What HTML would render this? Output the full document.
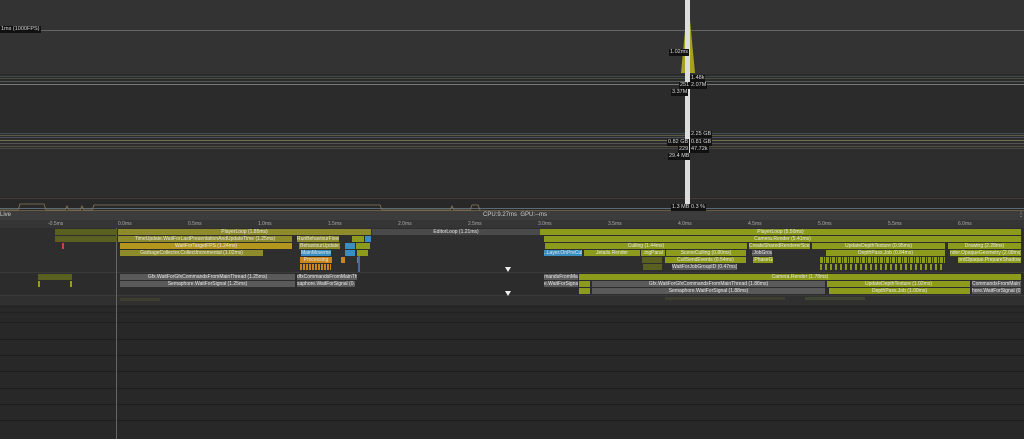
<!DOCTYPE html>
<html><head><meta charset="utf-8"><style>
*{margin:0;padding:0;box-sizing:border-box}
body{width:1024px;height:439px;overflow:hidden;background:#282828;position:relative;font-family:"Liberation Sans",sans-serif}
div{position:absolute}
.b{height:6px;font-size:5px;line-height:6px;color:#e8e8e8;text-align:center;white-space:nowrap;overflow:hidden}
.y{background:#8c9b1c}.o{background:#8e8c2a}.g{background:#5a5a5a}.bl{background:#3a8fc0}.or{background:#c9861a}.go{background:#b3971c}.dk{background:#5a6020}
.h{left:0;width:1024px;height:1px}
.lab{background:#111;color:#ddd;font-size:5.5px;line-height:7px;padding:0 1px;height:7px;white-space:nowrap}
.t{font-size:5px;color:#aaa;top:221px}
</style></head><body>
<div style="left:0;top:0;width:1024px;height:74px;background:#333"></div>
<div class="h" style="top:30px;background:#666"></div>
<div class="lab" style="left:0;top:26px">1ms (1000FPS)</div>
<div style="left:0;top:74px;width:1024px;height:58px;background:#2b2b2b"></div>
<div class="h" style="top:76px;background:#3e4a4a"></div>
<div class="h" style="top:78px;background:#4a5040"></div>
<div class="h" style="top:81px;background:#4f5a5a"></div>
<div class="h" style="top:84px;background:#777"></div>
<div style="left:0;top:132px;width:1024px;height:65px;background:#2d2d2d"></div>
<div class="h" style="top:133px;background:#3f4c56"></div>
<div class="h" style="top:135px;background:#5a5a40"></div>
<div class="h" style="top:137px;background:#4a5058"></div>
<div class="h" style="top:140px;background:#707050"></div>
<div class="h" style="top:143px;background:#555"></div>
<div class="h" style="top:146px;background:#5a5040"></div>
<div class="h" style="top:148px;background:#444"></div>
<div class="h" style="top:198px;background:#4a3a34"></div>
<div class="h" style="top:208px;background:#5b6a74"></div>
<div class="h" style="top:210px;background:#6a5a40"></div>
<svg style="position:absolute;left:0;top:0" width="1024" height="215"><polygon points="681,73 686,20 690,20 695,73" fill="#a8a020"/><polyline points="0,210 18,210 20,204 44,204 46,210 65,210 67,206 69,210 80,210 82,206 84,210 92,210 94,205 380,205 382,210 450,210 452,206 454,210 470,210 472,205 478,205 480,210" fill="none" stroke="#8a7a5a" stroke-width="0.8"/></svg>
<div style="left:685px;top:0;width:5px;height:211px;background:#ddd"></div>
<div class="lab" style="left:669px;top:49px">1.02ms</div>
<div class="lab" style="left:690px;top:75px">1.48k</div>
<div class="lab" style="left:679px;top:82px">251</div><div class="lab" style="left:690px;top:82px">2.07M</div>
<div class="lab" style="left:671px;top:89px">3.37M</div>
<div class="lab" style="left:690px;top:131px">2.25 GB</div>
<div class="lab" style="left:667px;top:139px">0.82 GB</div><div class="lab" style="left:690px;top:139px">0.81 GB</div>
<div class="lab" style="left:678px;top:146px">229</div><div class="lab" style="left:690px;top:146px">47.72k</div>
<div class="lab" style="left:668px;top:153px">29.4 MB</div>
<div class="lab" style="left:671px;top:204px">1.3 MB</div><div class="lab" style="left:690px;top:204px">0.3 %</div>
<div style="left:0;top:211px;width:1024px;height:9px;background:#3c3c3c;font-size:6px;color:#ccc;line-height:9px"><span style="position:absolute;left:0">Live</span><span style="position:absolute;left:483px">CPU:9.27ms&nbsp;&nbsp;GPU:--ms</span><span style="position:absolute;left:1018px">⋮</span></div>
<div style="left:0;top:220px;width:1024px;height:8px;background:#353535"></div>
<div class="t" style="left:48px">-0.5ms</div><div class="t" style="left:118px">0.0ms</div><div class="t" style="left:188px">0.5ms</div><div class="t" style="left:258px">1.0ms</div><div class="t" style="left:328px">1.5ms</div><div class="t" style="left:398px">2.0ms</div><div class="t" style="left:468px">2.5ms</div><div class="t" style="left:538px">3.0ms</div><div class="t" style="left:608px">3.5ms</div><div class="t" style="left:678px">4.0ms</div><div class="t" style="left:748px">4.5ms</div><div class="t" style="left:818px">5.0ms</div><div class="t" style="left:888px">5.5ms</div><div class="t" style="left:958px">6.0ms</div>
<div style="left:0;top:228px;width:1024px;height:44px;background:#2e2e2e"></div>
<div class="h" style="top:272px;background:#3a3a3a"></div>
<div style="left:0;top:273px;width:1024px;height:22px;background:#2c2c2c"></div>
<div class="h" style="top:295px;background:#3a3a3a"></div>
<div style="left:0;top:296px;width:1024px;height:9px;background:#303030"></div>
<div class="h" style="top:306px;background:#222"></div><div class="h" style="top:312px;background:#222"></div>
<div class="h" style="top:322px;background:#1e1e1e"></div><div class="h" style="top:339px;background:#1e1e1e"></div><div class="h" style="top:355px;background:#1e1e1e"></div><div class="h" style="top:371px;background:#1e1e1e"></div><div class="h" style="top:388px;background:#1e1e1e"></div><div class="h" style="top:404px;background:#1e1e1e"></div><div class="h" style="top:420px;background:#1e1e1e"></div>
<div style="left:116px;top:228px;width:1px;height:211px;background:#666"></div>
<!-- left rows -->
<div class="b dk" style="left:55px;top:229px;width:62px"></div>
<div class="b o" style="left:118px;top:229px;width:253px">PlayerLoop (1.85ms)</div>
<div class="b g" style="left:372px;top:229px;width:168px;background:#4a4a4a">EditorLoop (1.21ms)</div>
<div class="b dk" style="left:55px;top:236px;width:62px"></div>
<div class="b o" style="left:118px;top:236px;width:174px">TimeUpdate.WaitForLastPresentationAndUpdateTime (1.25ms)</div>
<div class="b o" style="left:297px;top:236px;width:42px">RunBehaviourFixed</div>
<div class="b y" style="left:352px;top:236px;width:12px"></div>
<div class="b bl" style="left:365px;top:236px;width:6px"></div>
<div class="b" style="left:62px;top:243px;width:2px;background:#c44"></div>
<div class="b go" style="left:120px;top:243px;width:172px">WaitForTargetFPS (1.24ms)</div>
<div class="b o" style="left:299px;top:243px;width:41px">BehaviourUpdate</div>
<div class="b bl" style="left:345px;top:243px;width:10px"></div>
<div class="b y" style="left:356px;top:243px;width:14px"></div>
<div class="b o" style="left:120px;top:250px;width:143px">GarbageCollector.CollectIncremental (1.02ms)</div>
<div class="b bl" style="left:301px;top:250px;width:30px">MainMovement</div>
<div class="b bl" style="left:345px;top:250px;width:10px"></div>
<div class="b y" style="left:357px;top:250px;width:11px"></div>
<div class="b or" style="left:300px;top:257px;width:32px">Processing</div>
<div class="b or" style="left:341px;top:257px;width:4px"></div>
<div class="b bl" style="left:357px;top:257px;width:2px"></div>
<div style="left:300px;top:264px;width:31px;height:6px;background:repeating-linear-gradient(90deg,#c9861a 0 2px,#2e2e2e 2px 3px)"></div>
<div style="left:358px;top:256px;width:2px;height:16px;background:#4a6a9a"></div>
<div class="b dk" style="left:38px;top:274px;width:34px"></div>
<div class="b g" style="left:120px;top:274px;width:175px">Gfx.WaitForGfxCommandsFromMainThread (1.25ms)</div>
<div class="b g" style="left:297px;top:274px;width:60px">dfxCommandsFromMainThr</div>
<div class="b g" style="left:120px;top:281px;width:175px">Semaphore.WaitForSignal (1.25ms)</div>
<div class="b g" style="left:297px;top:281px;width:58px">saphore.WaitForSignal (0.4)</div>
<div class="b" style="left:38px;top:281px;width:2px;background:#9a9a2a"></div>
<div class="b" style="left:70px;top:281px;width:2px;background:#9a9a2a"></div>
<div style="left:505px;top:267px;width:6px;height:5px;background:#eee;clip-path:polygon(0 0,100% 0,50% 100%)"></div>
<div style="left:505px;top:291px;width:6px;height:5px;background:#eee;clip-path:polygon(0 0,100% 0,50% 100%)"></div>
<div style="left:120px;top:298px;width:40px;height:3px;background:#3e3e30"></div>
<!-- right rows -->
<div class="b y" style="left:540px;top:229px;width:481px">PlayerLoop (5.50ms)</div>
<div class="b y" style="left:544px;top:236px;width:477px">Camera.Render (5.41ms)</div>
<div class="b y" style="left:545px;top:243px;width:202px">Culling (1.44ms)</div>
<div class="b y" style="left:749px;top:243px;width:61px">CreateSharedRendererScen</div>
<div class="b y" style="left:812px;top:243px;width:133px">UpdateDepthTexture (0.95ms)</div>
<div class="b y" style="left:948px;top:243px;width:73px">Drawing (2.28ms)</div>
<div class="b bl" style="left:544px;top:250px;width:38px">..Layer.OnPreCull</div>
<div class="b y" style="left:584px;top:250px;width:56px">Jetails.Render</div>
<div class="b y" style="left:641px;top:250px;width:24px">.ingParal</div>
<div class="b y" style="left:666px;top:250px;width:80px">SceneCulling (0.80ms)</div>
<div class="b g" style="left:752px;top:250px;width:20px">.JobGroupID</div>
<div class="b y" style="left:826px;top:250px;width:119px">DepthPass.Job (0.84ms)</div>
<div class="b y" style="left:950px;top:250px;width:71px">nder.OpaqueGeometry (2.08ms)</div>
<div class="b dk" style="left:642px;top:257px;width:20px"></div>
<div class="b y" style="left:665px;top:257px;width:81px">CullSendEvents (0.54ms)</div>
<div class="b y" style="left:753px;top:257px;width:20px">.PhaseGo</div>
<div style="left:820px;top:257px;width:125px;height:6px;background:repeating-linear-gradient(90deg,#8c9b1c 0 3px,#2e2e2e 3px 4px,#8c9b1c 4px 5px,#3a3a20 5px 6px)"></div>
<div class="b y" style="left:958px;top:257px;width:63px">ordOpaque.PrepareShadow</div>
<div class="b dk" style="left:643px;top:264px;width:19px"></div>
<div class="b g" style="left:672px;top:264px;width:65px">WaitForJobGroupID (0.47ms)</div>
<div style="left:820px;top:264px;width:125px;height:6px;background:repeating-linear-gradient(90deg,#8c9b1c 0 2px,#2e2e2e 2px 5px)"></div>
<div class="b g" style="left:544px;top:274px;width:34px">mandsFromMa</div>
<div class="b y" style="left:579px;top:274px;width:442px">Camera.Render (1.78ms)</div>
<div class="b g" style="left:544px;top:281px;width:34px">e.WaitForSignal</div>
<div class="b y" style="left:579px;top:281px;width:11px"></div>
<div class="b g" style="left:592px;top:281px;width:233px">Gfx.WaitForGfxCommandsFromMainThread (1.88ms)</div>
<div class="b y" style="left:827px;top:281px;width:143px">UpdateDepthTexture (1.02ms)</div>
<div class="b g" style="left:972px;top:281px;width:49px">CommandsFromMainT</div>
<div class="b y" style="left:579px;top:288px;width:11px"></div>
<div class="b g" style="left:592px;top:288px;width:233px">Semaphore.WaitForSignal (1.88ms)</div>
<div class="b y" style="left:829px;top:288px;width:141px">DepthPass.Job (1.00ms)</div>
<div class="b g" style="left:972px;top:288px;width:49px">hore.WaitForSignal (0.</div>
<div style="left:665px;top:297px;width:120px;height:3px;background:#3e3e30"></div>
<div style="left:805px;top:297px;width:60px;height:3px;background:#3e4530"></div>
</body></html>
